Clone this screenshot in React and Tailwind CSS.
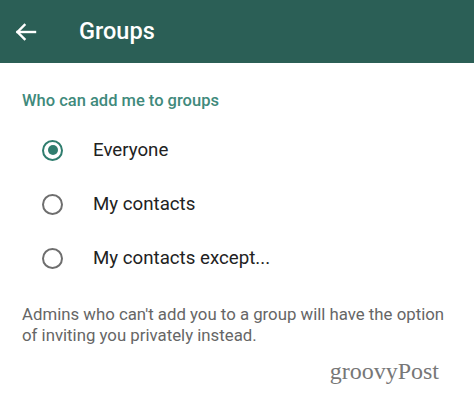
export default function App() {
  const options = [
    { label: "Everyone", checked: true },
    { label: "My contacts", checked: false },
    { label: "My contacts except...", checked: false },
  ];
  return (
    <div className="w-[474px] h-[410px] bg-white overflow-hidden" style={{ fontFamily: "Roboto, 'Noto Sans', sans-serif" }}>
      <div className="h-[63px] bg-[#2b5f56] flex items-center">
        <svg width="22" height="18" viewBox="0 0 22 18" className="ml-[15px]" fill="none" stroke="white" strokeWidth="2.4" strokeLinecap="square">
          <path d="M2.5 9 H20" />
          <path d="M9.5 2 L2.5 9 L9.5 16" />
        </svg>
        <span className="ml-[42px] text-[23.5px] font-medium text-white leading-none">Groups</span>
      </div>
      <div className="pl-[22px] pt-[28px] text-[16.5px] font-medium text-[#3f8a7c] leading-[20px]">
        Who can add me to groups
      </div>
      <div className="mt-[12px] flex flex-col">
        {options.map((o) => (
          <div key={o.label} className="h-[54px] flex items-center">
            <div
              className={
                "ml-[42px] w-[21px] h-[21px] rounded-full border-[2.5px] flex items-center justify-center " +
                (o.checked ? "border-[#2f7d6e]" : "border-[#6e6e6e]")
              }
            >
              {o.checked && <div className="w-[10px] h-[10px] rounded-full bg-[#2f7d6e]" />}
            </div>
            <span className="ml-[30px] text-[18.7px] text-[#222] leading-none">{o.label}</span>
          </div>
        ))}
      </div>
      <div className="pl-[22px] pr-[22px] mt-[19px] text-[16.8px] text-[#666] leading-[21px]">
        Admins who can't add you to a group will have the option of inviting you privately instead.
      </div>
      <div className="flex justify-end pr-[35px] mt-[10px]">
        <span className="text-[24px] text-[#777] leading-[30px]" style={{ fontFamily: "'Liberation Serif', serif" }}>groovyPost</span>
      </div>
    </div>
  );
}
